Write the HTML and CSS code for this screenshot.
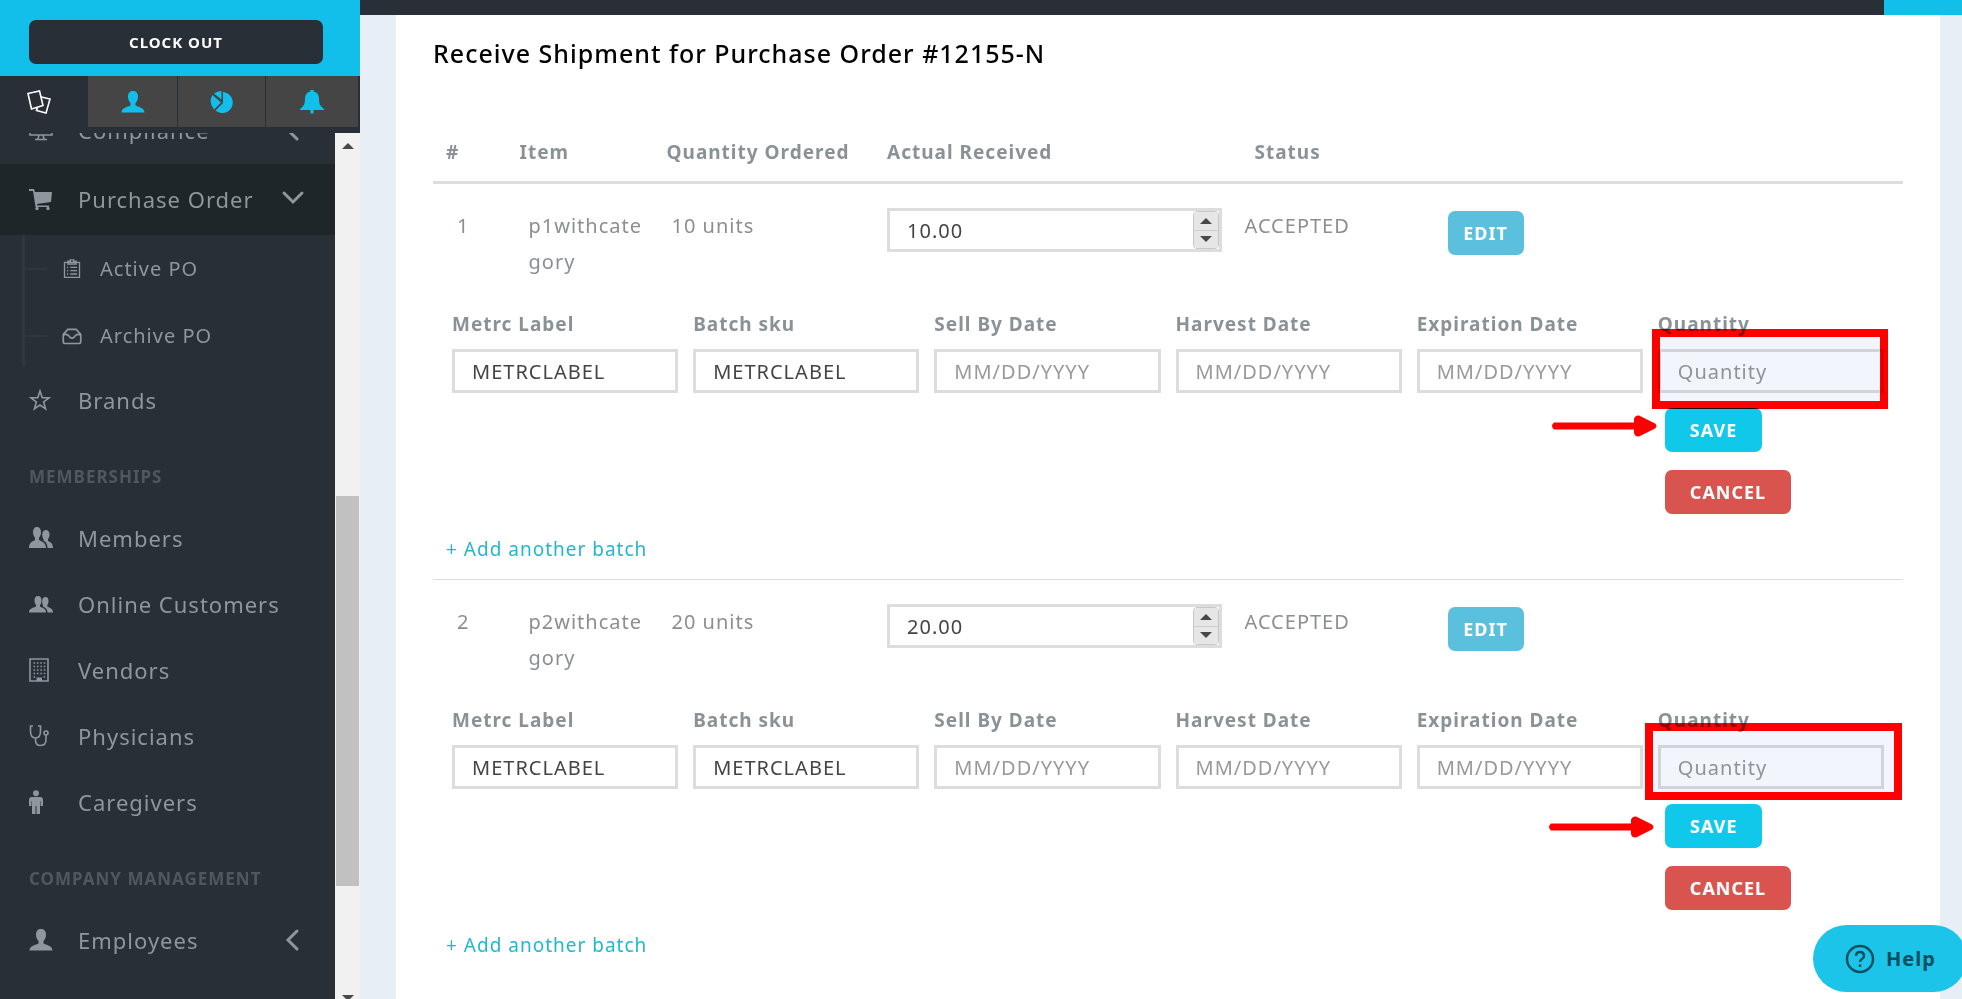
FILE: index.html
```
<!DOCTYPE html>
<html lang="en">
<head>
	<meta charset="UTF-8">
	<meta name="viewport" content="width=device-width, initial-scale=1">
	<title>Receive Shipment</title>
	<link rel="stylesheet" href="styles.css">
</head>
<body>
	<svg class="sprite" aria-hidden="true">
		<symbol id="i-user" viewBox="0 0 24 24"><path d="M12 1c3 0 5 2 5 5.500 0 3-1 5-2.500 6.500v2.500c2.500 1.500 9 2 9 7H.500c0-5 6.500-5.500 9-7V13C8 11.500 7 9.500 7 6.500 7 3 9 1 12 1z"/></symbol>
		<symbol id="i-users" viewBox="0 0 24 24"><path d="M8 1c2.500 0 4 2 4 5s-1 4.500-2 6v2c2 1.500 7 2 7 8H0c0-6 4-6.500 6-8v-2C5 10.500 4 9 4 6s1.500-5 4-5z"/><path d="M17 4c2 0 3.500 1.500 3.500 4.500 0 2-.700 3.500-1.500 4.500v2c1.500 1 5 1.500 5 7h-5.500c0-5-2.500-6.500-4-7.500V13c-.700-1-1.300-2.500-1.300-4.500C13.200 5.500 15 4 17 4z"/></symbol>
		<symbol id="i-group" viewBox="0 0 24 24"><path d="M9 4c2.500 0 3.500 2 3.500 4.500S12 12 11 13v1.500c2 1.500 6 1.500 6 6H0c0-4.500 4.500-4.500 7-6V13C6 12 5.500 11 5.500 8.500S6.500 4 9 4z"/><path d="M16.500 5c2 0 3 1.500 3 4 0 2-.500 3-1.200 4v1.500c2 1.500 5.700 1.500 5.700 6h-5.500c0-3.500-2.500-5-4.500-6V13.500c-.500-1-.800-2-.800-4.500 0-2.500 1.300-4 3.300-4z"/></symbol>
		<symbol id="i-cart" viewBox="0 0 24 24"><path d="M0 2h5l1 3h17l-1 10-14 2 .500 1.500H20V20H6.500L4 4H0z"/><circle cx="8" cy="21.500" r="1.700"/><circle cx="19" cy="21.500" r="1.700"/></symbol>
		<symbol id="i-monitor" viewBox="0 0 24 24"><path class="line" d="M1 3h22v14H1zM1 13.500h22M10 17l-1 4M14 17l1 4M6 21.500h12"/></symbol>
		<symbol id="i-clipboard" viewBox="0 0 24 24"><path class="line" d="M3 4h18v18H3zM7 2.500h3V1h4v1.500h3V6H7zM6 10h1.500M10 10h8M6 14h1.500M10 14h8M6 18h1.500M10 18h8"/></symbol>
		<symbol id="i-inbox" viewBox="0 0 24 24"><path class="line inbox" d="M1.500 10 7 4h10l5.500 6v9q0 2-2 2h-17q-2 0-2-2zM1.500 11q3-2 6 0l2 2.500q2.500 2 5 0l2-2.500q3-2 6 0"/></symbol>
		<symbol id="i-star" viewBox="0 0 24 24"><path class="line" d="m11 3 2.200 6.600 6.800.2-5.400 4.200 2 6.800L11 17l-5.600 3.800 2-6.800L2 9.800l6.800-.2z"/></symbol>
		<symbol id="i-building" viewBox="0 0 24 24"><path class="line" d="M1 1h18v22H1z"/><path class="dots" d="M4.500 5h12M4.500 8.500h12M4.500 12h12M4.500 15.500h12M4.500 19h3M14.500 19h2"/><path d="M7.500 19.500h5.500V23H7.500z"/></symbol>
		<symbol id="i-stetho" viewBox="0 0 24 24"><path class="line" d="M4 2H1.500v5c0 4 1.500 7 5 7s5-3 5-7V2H9M6.500 14v2c0 4 2 5.500 5 5.500s5.500-2 5.500-6V11"/><circle class="line" cx="17" cy="9" r="2"/></symbol>
		<symbol id="i-man" viewBox="0 0 24 24"><circle cx="7" cy="3.200" r="3"/><path d="M3 7h8q3 0 3 3v6h-2.500v-5H11v13H7.500v-8h-1v8H3V11h-.500v5H0v-6q0-3 3-3z"/></symbol>
		<symbol id="i-cards" viewBox="0 0 24 24"><path class="line" d="M1 3.500 12.500 1l3.500 14.500L4.500 19zM14.500 7l8.500 2-4 14-9.500-2.500 1-3.200"/></symbol>
		<symbol id="i-pie" viewBox="0 0 24 24"><path d="M13 2a10.500 10.500 0 1 1-7.500 18.500L13 13z"/><path d="M11.500 1v8.500L4 3.500Q7 1 11.500 1zM2.500 5l8.500 7.500-7 7Q-2 12 2.500 5z"/></symbol>
		<symbol id="i-bell" viewBox="0 0 24 24"><path d="M10.500 0h3v1.500c4 1 5.500 3.500 5.500 7.500 0 5 1.500 7.500 5 10v1h-10.500v3.500h-3V20H0v-1c3.500-2.500 5-5 5-10 0-4 1.500-6.500 5.500-7.500z"/></symbol>
		<symbol id="i-left" viewBox="0 0 24 24"><path class="thick" d="M16 3 7 12l9 9"/></symbol>
		<symbol id="i-down" viewBox="0 0 24 24"><path class="thick" d="m3 6 9 9 9-9"/></symbol>
		<symbol id="i-arrow" viewBox="0 0 107 22"><path d="M4 7.500h80V4q1-4 5-3.500l16 8q3 2.500 0 5l-16 8q-4 .500-5-3.500v-3.500H4q-4-3.500 0-7z"/></symbol>
	</svg>

	<div class="layout">
		<aside class="sidebar">
			<div class="clock">
				<button class="btn btn-clock" type="button">CLOCK OUT</button>
			</div>
			<div class="tabs">
				<button class="tab active" type="button" aria-label="Menu"><svg><use href="#i-cards"/></svg></button>
				<button class="tab" type="button" aria-label="Profile"><svg><use href="#i-user"/></svg></button>
				<button class="tab" type="button" aria-label="Reports"><svg><use href="#i-pie"/></svg></button>
				<button class="tab" type="button" aria-label="Notifications"><svg><use href="#i-bell"/></svg></button>
			</div>
			<div class="scroller">
				<nav class="menu">
					<div class="menu-inner">
						<a class="item" href="#"><svg><use href="#i-monitor"/></svg><span>Compliance</span><svg class="caret"><use href="#i-left"/></svg></a>
						<a class="item open" href="#"><svg><use href="#i-cart"/></svg><span>Purchase Order</span><svg class="caret"><use href="#i-down"/></svg></a>
						<div class="submenu">
							<a class="subitem" href="#"><svg><use href="#i-clipboard"/></svg><span>Active PO</span></a>
							<a class="subitem" href="#"><svg><use href="#i-inbox"/></svg><span>Archive PO</span></a>
						</div>
						<a class="item" href="#"><svg><use href="#i-star"/></svg><span>Brands</span></a>
						<h2 class="group">MEMBERSHIPS</h2>
						<a class="item" href="#"><svg><use href="#i-users"/></svg><span>Members</span></a>
						<a class="item" href="#"><svg><use href="#i-group"/></svg><span>Online Customers</span></a>
						<a class="item" href="#"><svg><use href="#i-building"/></svg><span>Vendors</span></a>
						<a class="item" href="#"><svg><use href="#i-stetho"/></svg><span>Physicians</span></a>
						<a class="item" href="#"><svg><use href="#i-man"/></svg><span>Caregivers</span></a>
						<h2 class="group">COMPANY MANAGEMENT</h2>
						<a class="item" href="#"><svg><use href="#i-user"/></svg><span>Employees</span><svg class="caret"><use href="#i-left"/></svg></a>
					</div>
				</nav>
				<div class="scrollbar" aria-hidden="true">
					<i class="up"></i>
					<div class="track"><div class="thumb"></div></div>
					<i class="down"></i>
				</div>
			</div>
		</aside>

		<div class="page">
			<header class="topbar"><div class="topbar-end"></div></header>
			<main class="panel">
				<h1>Receive Shipment for Purchase Order #12155-N</h1>
				<table class="orders">
					<colgroup>
						<col class="c-num"><col class="c-item"><col class="c-qty"><col class="c-actual"><col class="c-status"><col>
					</colgroup>
					<thead>
						<tr><th>#</th><th>Item</th><th>Quantity Ordered</th><th>Actual Received</th><th>Status</th><th></th></tr>
					</thead>
					<tbody>
						<tr>
							<td class="num">1</td>
							<td class="name">p1withcategory</td>
							<td class="units">10 units</td>
							<td>
								<div class="number">
									<input type="text" inputmode="decimal" value="10.00" aria-label="Actual received 1">
									<div class="spin">
										<button type="button" aria-label="Increase"><i class="up"></i></button>
										<button type="button" aria-label="Decrease"><i class="down"></i></button>
									</div>
								</div>
							</td>
							<td class="status">ACCEPTED</td>
							<td class="edit"><button class="btn btn-edit" type="button">EDIT</button></td>
						</tr>
						<tr class="batch-row">
							<td colspan="6">
								<div class="batch">
									<div class="field"><label for="metrc1">Metrc Label</label><input id="metrc1" type="text" value="METRCLABEL"></div>
									<div class="field"><label for="sku1">Batch sku</label><input id="sku1" type="text" value="METRCLABEL"></div>
									<div class="field"><label for="sell1">Sell By Date</label><input id="sell1" type="text" placeholder="MM/DD/YYYY"></div>
									<div class="field"><label for="harvest1">Harvest Date</label><input id="harvest1" type="text" placeholder="MM/DD/YYYY"></div>
									<div class="field"><label for="exp1">Expiration Date</label><input id="exp1" type="text" placeholder="MM/DD/YYYY"></div>
									<div class="field">
										<label for="qty1">Quantity</label><input id="qty1" type="text" placeholder="Quantity">
										<div class="actions">
											<button class="btn btn-save" type="button">SAVE</button>
											<button class="btn btn-cancel" type="button">CANCEL</button>
										</div>
										<div class="mark mark-first"></div>
										<svg class="arrow arrow-first"><use href="#i-arrow"/></svg>
									</div>
								</div>
								<a class="add" href="#">+ Add another batch</a>
							</td>
						</tr>
						<tr>
							<td class="num">2</td>
							<td class="name">p2withcategory</td>
							<td class="units">20 units</td>
							<td>
								<div class="number">
									<input type="text" inputmode="decimal" value="20.00" aria-label="Actual received 2">
									<div class="spin">
										<button type="button" aria-label="Increase"><i class="up"></i></button>
										<button type="button" aria-label="Decrease"><i class="down"></i></button>
									</div>
								</div>
							</td>
							<td class="status">ACCEPTED</td>
							<td class="edit"><button class="btn btn-edit" type="button">EDIT</button></td>
						</tr>
						<tr class="batch-row">
							<td colspan="6">
								<div class="batch">
									<div class="field"><label for="metrc2">Metrc Label</label><input id="metrc2" type="text" value="METRCLABEL"></div>
									<div class="field"><label for="sku2">Batch sku</label><input id="sku2" type="text" value="METRCLABEL"></div>
									<div class="field"><label for="sell2">Sell By Date</label><input id="sell2" type="text" placeholder="MM/DD/YYYY"></div>
									<div class="field"><label for="harvest2">Harvest Date</label><input id="harvest2" type="text" placeholder="MM/DD/YYYY"></div>
									<div class="field"><label for="exp2">Expiration Date</label><input id="exp2" type="text" placeholder="MM/DD/YYYY"></div>
									<div class="field">
										<label for="qty2">Quantity</label><input id="qty2" type="text" placeholder="Quantity">
										<div class="actions">
											<button class="btn btn-save" type="button">SAVE</button>
											<button class="btn btn-cancel" type="button">CANCEL</button>
										</div>
										<div class="mark mark-second"></div>
										<svg class="arrow arrow-second"><use href="#i-arrow"/></svg>
									</div>
								</div>
								<a class="add" href="#">+ Add another batch</a>
							</td>
						</tr>
					</tbody>
				</table>
			</main>
		</div>
	</div>

	<button class="help" type="button">
		<svg viewBox="0 0 30 30"><circle cx="15" cy="15" r="13"/><path d="M11 12q0-4 4-4t4 4q0 2-2 3-2 1-2 3"/><path d="M15 20.500v2.500"/></svg>
		<span>Help</span>
	</button>
</body>
</html>
```
FILE: styles.css
```
*{
	box-sizing: border-box;
}
body{
	margin: 0;
	background-color: #e7eef6;
	color: #8a8f93;
	font-family: "Noto Sans", "Open Sans", sans-serif;
	font-size: 20px;
	line-height: 36px;
	letter-spacing: 1px;
}
button, input{
	font: inherit;
	letter-spacing: inherit;
}
button{
	padding: 0;
	border: 0;
	cursor: pointer;
}
a{
	text-decoration: none;
}
svg{
	fill: currentColor;
	flex: none;
}
.sprite{
	position: absolute;
	width: 0;
	height: 0;
}
.line{
	fill: none;
	stroke: currentColor;
	stroke-width: 1.6;
}
.inbox{
	stroke-width: 2;
}
.dots{
	fill: none;
	stroke: currentColor;
	stroke-width: 1.6;
	stroke-dasharray: 1.6 1.8;
}
.thick{
	fill: none;
	stroke: currentColor;
	stroke-width: 3;
	stroke-linecap: round;
}
.layout{
	display: flex;
	height: 100vh;
	overflow: hidden;
}

/* sidebar */
.sidebar{
	display: flex;
	flex-direction: column;
	flex: none;
	width: 360px;
	background-color: #282f36;
}
.clock{
	padding: 20px 37px 12px 29px;
	background-color: #11bfea;
}
.btn{
	height: 44px;
	border-radius: 7px;
	color: #fff;
	font-size: 18px;
	font-weight: 700;
	line-height: 44px;
}
.btn-clock{
	display: block;
	width: 100%;
	background-color: #282f36;
	font-size: 15px;
}
.tabs{
	display: grid;
	grid-template-columns: 88px 90px 88px 1fr;
	height: 57px;
	padding-bottom: 6px;
	border-right: 1px solid #282f36;
}
.tab{
	display: flex;
	align-items: center;
	justify-content: center;
	background-color: #454545;
	color: #11bfea;
	border-right: 1px solid #282f36;
}
.tab.active{
	background-color: #282f36;
	color: #fff;
	padding-right: 10px;
}
.tab svg{
	width: 24px;
	height: 24px;
}
.scroller{
	display: flex;
	flex: 1;
	min-height: 0;
}
.menu{
	flex: 1;
	overflow: hidden;
}
.menu-inner{
	margin-top: -35px;
}
.item{
	display: flex;
	align-items: center;
	height: 66px;
	padding: 0 30px 2px 29px;
	color: #8f969c;
	font-size: 22px;
}
.item svg{
	width: 24px;
	height: 24px;
	margin-right: 25px;
}
.item span{
	flex: 1;
}
.item .caret{
	width: 24px;
	margin-right: 0;
}
.item.open{
	height: 71px;
	background-color: #1f262a;
}
.submenu{
	height: 131px;
	margin-bottom: 2px;
	margin-left: 22px;
	border-left: 3px solid #30383e;
}
.subitem{
	display: flex;
	align-items: center;
	height: 67px;
	color: #8f969c;
}
.subitem::before{
	content: "";
	width: 22px;
	height: 2px;
	background-color: #30383e;
}
.subitem svg{
	width: 20px;
	height: 20px;
	margin: 0 18px 0 15px;
}
.group{
	height: 72px;
	margin: 0;
	padding: 25px 0 0 29px;
	color: #50585f;
	font-size: 17px;
}
.scrollbar{
	display: flex;
	flex-direction: column;
	align-items: center;
	width: 25px;
	background-color: #f1f1f1;
}
.up, .down{
	width: 0;
	height: 0;
	border: 6px solid transparent;
}
.up{
	border-top: 0;
	border-bottom-color: #484848;
}
.down{
	border-bottom: 0;
	border-top-color: #484848;
}
.scrollbar .up{
	margin: 10px 0;
}
.scrollbar .down{
	margin-bottom: -2px;
}
.track{
	flex: 1;
	width: 23px;
}
.thumb{
	height: 390px;
	margin-top: 337px;
	background-color: #c1c1c1;
}

/* page */
.page{
	display: flex;
	flex-direction: column;
	flex: 1;
	min-width: 0;
}
.topbar{
	display: flex;
	justify-content: flex-end;
	flex: none;
	height: 15px;
	background-color: #282f36;
}
.topbar-end{
	width: 78px;
	background-color: #11bfea;
}
.panel{
	flex: 1;
	margin: 0 22px 0 36px;
	padding: 20px 37px 0;
	background-color: #fff;
}
h1{
	margin: 0 0 50px;
	color: #000;
	font-size: 25px;
	font-weight: 500;
	line-height: 36px;
}

/* orders table */
.orders{
	width: 100%;
	border-collapse: separate;
	border-spacing: 0;
	table-layout: fixed;
}
.c-num{
	width: 5%;
}
.c-item{
	width: 10%;
}
.c-qty{
	width: 15%;
}
.c-actual{
	width: 25%;
}
.c-status{
	width: 13%;
}
th{
	padding: 13px 0 11px 13px;
	border-bottom: 3px solid #ddd;
	color: #8a9297;
	font-size: 19px;
	text-align: left;
	white-space: nowrap;
}
td{
	padding: 24px 0 0 13px;
	vertical-align: top;
}
td.num{
	padding-left: 24px;
}
td.name{
	padding-left: 22px;
	padding-right: 10px;
	word-break: break-all;
}
td.units{
	padding-left: 18px;
}
td.status{
	padding-left: 3px;
}
td.edit{
	padding-left: 15px;
}
.number{
	display: flex;
	margin-right: 20px;
	border: 3px solid #ddd;
}
.number input{
	flex: 1;
	min-width: 0;
	height: 38px;
	padding: 0 17px;
	border: 0;
	color: #444;
}
.spin{
	display: flex;
	flex-direction: column;
	width: 26px;
	border: 1px solid #c8c8c8;
	border-radius: 4px;
	overflow: hidden;
}
.spin button{
	display: flex;
	flex: 1;
	align-items: center;
	justify-content: center;
	background-color: #e6e6e6;
}
.spin button + button{
	border-top: 1px solid #cfcfcf;
}
.btn-edit{
	width: 76px;
	margin-top: 3px;
	background-color: #5bc0de;
}
.batch-row td{
	padding: 25px 19px 12px;
	border-bottom: 1px solid #ddd;
}
.batch-row:last-child td{
	border-bottom: 0;
}
.batch{
	display: grid;
	grid-template-columns: repeat(6, 1fr);
	gap: 15px;
}
.field{
	position: relative;
	min-width: 0;
}
.field label{
	display: block;
	padding-top: 1px;
	margin-bottom: 7px;
	color: #8a9297;
	font-size: 19px;
	font-weight: 700;
	white-space: nowrap;
}
.field input{
	display: block;
	width: 100%;
	height: 44px;
	padding: 0 17px;
	border: 3px solid #ddd;
	color: #444;
}
input::placeholder{
	color: #999;
	opacity: 1;
}
.actions{
	display: flex;
	flex-direction: column;
	align-items: flex-start;
	gap: 18px;
	padding: 15px 0 17px 7px;
}
.btn-save{
	padding: 0 25px;
	background-color: #10c9ea;
}
.btn-cancel{
	padding: 0 25px;
	background-color: #d9534f;
}
.add{
	display: block;
	margin-left: -6px;
	color: #23b7cf;
	font-size: 19px;
}

/* highlights over the quantity fields */
.mark{
	position: absolute;
	border: 8px solid #f00;
	background-color: #f2f5fb;
	mix-blend-mode: multiply;
	pointer-events: none;
}
.mark-first{
	top: 24px;
	left: -6px;
	right: -4px;
	height: 80px;
}
.mark-second{
	top: 22px;
	left: -13px;
	right: -18px;
	height: 77px;
}
.arrow{
	position: absolute;
	left: -108px;
	width: 107px;
	height: 22px;
	color: #f00;
}
.arrow-first{
	top: 110px;
}
.arrow-second{
	top: 115px;
	left: -111px;
}

.help{
	position: fixed;
	right: -5px;
	bottom: 7px;
	display: flex;
	align-items: center;
	gap: 11px;
	width: 154px;
	height: 67px;
	padding-left: 32px;
	border-radius: 34px;
	background-color: #1dc4e9;
	color: #0b4f5e;
	font-weight: 700;
}
.help svg{
	width: 30px;
	height: 30px;
	fill: none;
	stroke: currentColor;
	stroke-width: 2.5;
}
```
